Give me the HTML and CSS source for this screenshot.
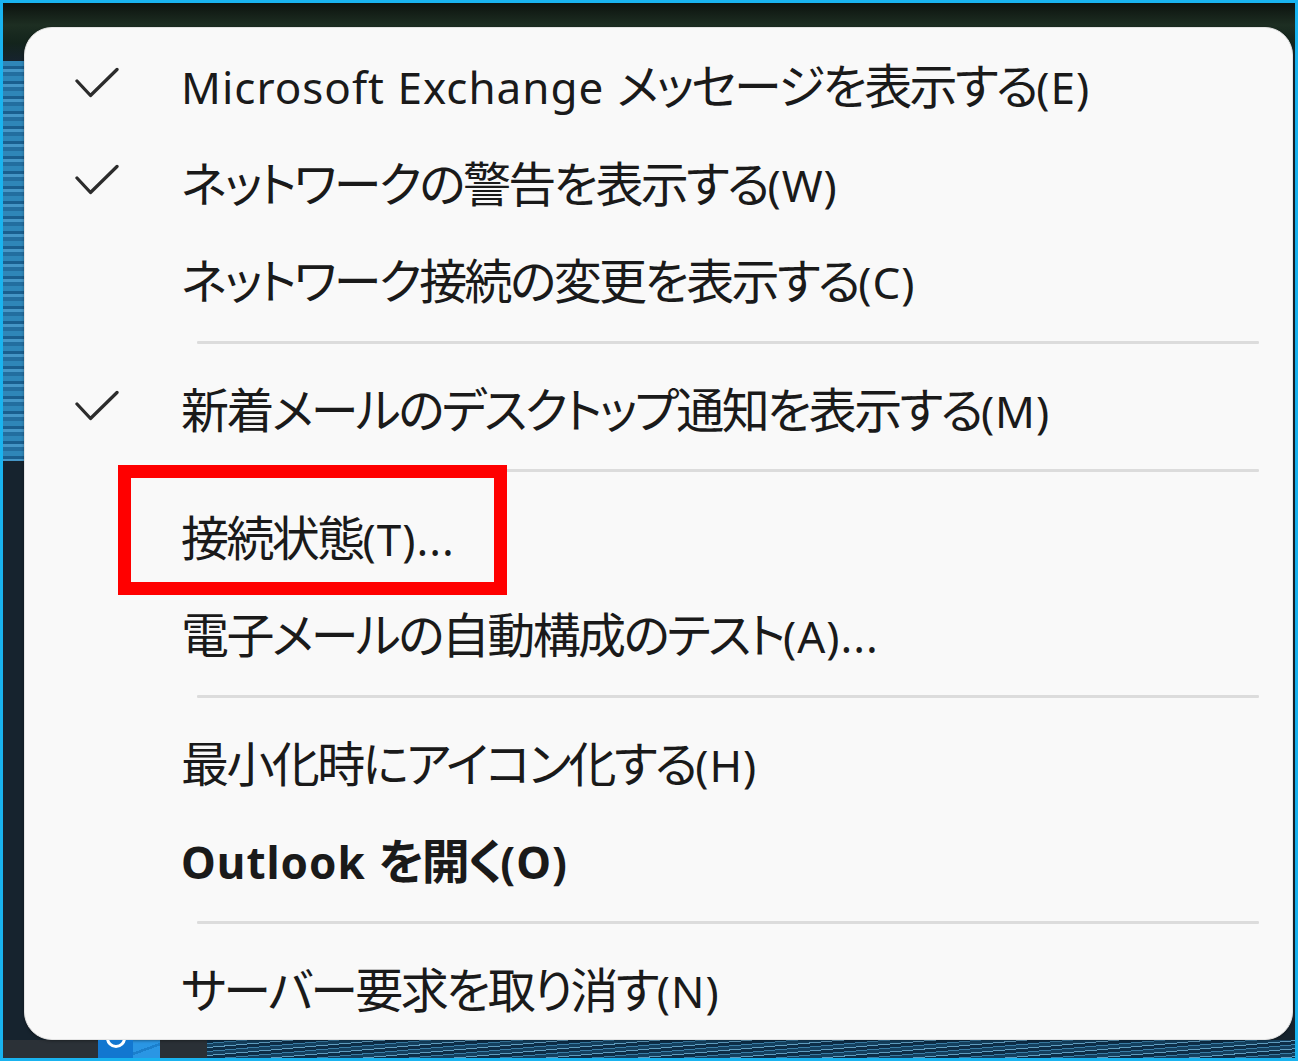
FILE: index.html
```html
<!DOCTYPE html>
<html lang="ja">
<head>
<meta charset="utf-8">
<title>Outlook context menu</title>
<link rel="stylesheet" href="styles.css">
</head>
<body>
<div class="desktop">
  <div class="menu">
    <div class="item"><span class="mark"><svg class="check" viewBox="0 0 44 32" width="44" height="32"><path d="M2 14 L15.5 28.5 L42 2.5"/></svg></span><span class="label"><span class="en">Microsoft Exchange </span>メッセージを表示する<span class="en">(E)</span></span></div>
    <div class="item"><span class="mark"><svg class="check" viewBox="0 0 44 32" width="44" height="32"><path d="M2 14 L15.5 28.5 L42 2.5"/></svg></span><span class="label">ネットワークの警告を表示する<span class="en">(W)</span></span></div>
    <div class="item"><span class="mark"></span><span class="label">ネットワーク接続の変更を表示する<span class="en">(C)</span></span></div>
    <div class="sep"></div>
    <div class="item"><span class="mark"><svg class="check" viewBox="0 0 44 32" width="44" height="32"><path d="M2 14 L15.5 28.5 L42 2.5"/></svg></span><span class="label">新着メールのデスクトップ通知を表示する<span class="en">(M)</span></span></div>
    <div class="sep"></div>
    <div class="item"><span class="mark"></span><span class="label">接続状態<span class="en">(T)...</span></span></div>
    <div class="item"><span class="mark"></span><span class="label">電子メールの自動構成のテスト<span class="en">(A)...</span></span></div>
    <div class="sep"></div>
    <div class="item"><span class="mark"></span><span class="label">最小化時にアイコン化する<span class="en">(H)</span></span></div>
    <div class="item bold"><span class="mark"></span><span class="label"><span class="en">Outlook </span>を開く<span class="en">(O)</span></span></div>
    <div class="sep"></div>
    <div class="item"><span class="mark"></span><span class="label">サーバー要求を取り消す<span class="en">(N)</span></span></div>
    <div class="highlight"></div>
  </div>
  <div class="taskbar">
    <span class="tb-dark"></span>
    <span class="tb-outlook"><span class="tb-ring"></span></span>
    <span class="tb-mail"></span>
    <span class="tb-dark2"></span>
    <span class="tb-water"></span>
  </div>
</div>
</body>
</html>
```
FILE: styles.css
```css
html, body {
  margin: 0;
  padding: 0;
}
body {
  width: 1298px;
  height: 1061px;
  overflow: hidden;
  background: #15222d;
}
.desktop {
  box-sizing: border-box;
  width: 1298px;
  height: 1061px;
  border: 3px solid #19b3ef;
  padding-top: 24px;
  display: flex;
  flex-direction: column;
  background-color: #16232e;
  background-image:
    linear-gradient(180deg, #0c120e 0px, #1d2e22 22px, #13241c 40px, rgba(0,0,0,0) 58px),
    repeating-linear-gradient(180deg, #2f86b8 0px, #2f86b8 5px, #1a5f8f 5px, #1a5f8f 8px, #4596c6 8px, #4596c6 11px, #236e9f 11px, #236e9f 15px),
    linear-gradient(90deg, #0c1a22, #0f2436);
  background-size: 100% 60px, 24px 400px, 100% 30px;
  background-position: 0 0, 0 58px, 0 0;
  background-repeat: no-repeat;
}
.menu {
  position: relative;
  box-sizing: border-box;
  margin-left: 21px;
  width: 1269px;
  height: 1013px;
  padding-top: 9.4px;
  background: #f9f9f9;
  border: 1px solid #e4e4e4;
  border-radius: 28px;
  box-shadow: 0 1px 3px rgba(0, 0, 0, 0.35);
  overflow: hidden;
  color: #1a1a1a;
  font-family: "Noto Sans CJK JP", "Noto Sans", sans-serif;
  font-size: 48px;
  font-feature-settings: "palt";
  flex: none;
}
.item {
  display: flex;
  align-items: center;
  height: 97.3px;
  line-height: 97.3px;
  white-space: nowrap;
}
.mark {
  width: 156px;
  flex: none;
  display: flex;
  align-items: center;
  padding-left: 50px;
  box-sizing: border-box;
  height: 100%;
}
.check {
  display: block;
  margin-top: -7px;
}
.check path {
  fill: none;
  stroke: #2c2c2c;
  stroke-width: 3.3;
  stroke-linecap: round;
  stroke-linejoin: round;
}
.label {
  display: block;
  letter-spacing: -2.6px;
}
.en {
  font-family: "Noto Sans", "Noto Sans CJK JP", sans-serif;
  font-size: 44px;
  letter-spacing: 1px;
}
.bold .label {
  font-weight: 700;
}
.sep {
  height: 3px;
  margin: 11.5px 33px 16.8px 172px;
  background: #dcdcdc;
  border-radius: 1px;
}
.highlight {
  position: absolute;
  left: 93px;
  top: 437px;
  width: 389px;
  height: 130px;
  box-sizing: border-box;
  border: 13px solid #ff0000;
}
.taskbar {
  flex: 1;
  display: flex;
  margin-top: 0;
}
.taskbar > span {
  display: block;
  height: 100%;
}
.tb-dark {
  width: 95px;
  background: #2b3137;
}
.tb-outlook {
  width: 35px;
  background: #1277d0;
  position: relative;
  overflow: hidden;
}
.tb-ring {
  position: absolute;
  left: 8px;
  top: -12px;
  width: 14px;
  height: 14px;
  border: 3px solid #ffffff;
  border-radius: 50%;
}
.tb-mail {
  width: 27px;
  background: linear-gradient(160deg, #2a96e4 0 45%, #1b7fcc 45% 55%, #2a96e4 55%);
}
.tb-dark2 {
  width: 47px;
  background: #2a3036;
}
.tb-water {
  flex: 1;
  background: repeating-linear-gradient(175deg, #0d2e48 0px, #0d2e48 3px, #3b7ea6 3px, #3b7ea6 4px, #14405f 4px, #14405f 7px, #5f9dc0 7px, #5f9dc0 8px);
}
```
